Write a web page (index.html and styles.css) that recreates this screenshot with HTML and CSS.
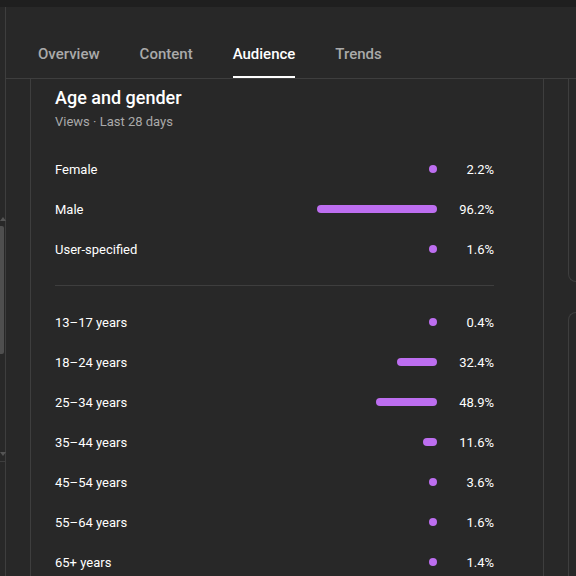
FILE: index.html
```html
<!DOCTYPE html>
<html lang="en">
<head>
    <meta charset="UTF-8">
    <meta name="viewport" content="width=device-width, initial-scale=1.0">
    <title>Audience</title>
    <link rel="stylesheet" href="styles.css">
</head>
<body>
    <div class="topbar"></div>
    <div class="page">
        <aside class="rail">
            <span class="arrow up"></span>
            <span class="thumb"></span>
            <span class="arrow down"></span>
            <span class="rail-line"></span>
        </aside>
        <main class="main">
            <nav class="tabs">
                <a class="tab">Overview</a>
                <a class="tab">Content</a>
                <a class="tab active">Audience</a>
                <a class="tab">Trends</a>
            </nav>
            <div class="columns">
                <section class="card">
                    <h2>Age and gender</h2>
                    <p class="subtitle">Views · Last 28 days</p>
                    <div class="list" id="gender"></div>
                    <hr class="divider">
                    <div class="list" id="age"></div>
                </section>
                <div class="side">
                    <div class="side-card first"></div>
                    <div class="side-card second"></div>
                </div>
            </div>
        </main>
    </div>

    <script>
        document.addEventListener('DOMContentLoaded', () => {
            const gender = [
                ['Female', 2.2],
                ['Male', 96.2],
                ['User-specified', 1.6],
            ];
            const age = [
                ['13–17 years', 0.4],
                ['18–24 years', 32.4],
                ['25–34 years', 48.9],
                ['35–44 years', 11.6],
                ['45–54 years', 3.6],
                ['55–64 years', 1.6],
                ['65+ years', 1.4],
            ];

            function renderList(container, rows) {
                rows.forEach(([label, pct]) => {
                    const width = Math.max(8, Math.round(pct * 1.247));
                    const row = document.createElement('div');
                    row.className = 'row';
                    row.innerHTML = `
                        <span class="label">${label}</span>
                        <span class="track"><span class="bar" style="width:${width}px"></span></span>
                        <span class="pct">${pct.toFixed(1)}%</span>
                    `;
                    container.appendChild(row);
                });
            }

            renderList(document.getElementById('gender'), gender);
            renderList(document.getElementById('age'), age);
        });
    </script>
</body>
</html>
```

FILE: styles.css
```css
body {
    margin: 0;
    height: 576px;
    overflow: hidden;
    background-color: #282828;
    color: #fff;
    font-family: Roboto, "Noto Sans", sans-serif;
}
.topbar {
    height: 7px;
    background-color: #1f1f1f;
}
.page {
    display: flex;
    height: 569px;
}
.rail {
    width: 5px;
    border-right: 1px solid #3e3e3e;
    display: flex;
    flex-direction: column;
    align-items: flex-start;
    padding-top: 210px;
}
.arrow {
    width: 0;
    height: 0;
    border-left: 3px solid transparent;
    border-right: 3px solid transparent;
}
.arrow.up {
    border-bottom: 4px solid #555;
}
.arrow.down {
    border-top: 4px solid #555;
    margin-top: 98px;
}
.thumb {
    width: 4px;
    height: 128px;
    margin-top: 5px;
    background-color: #4f4f4f;
    border-radius: 0 2px 2px 0;
}
.rail-line {
    width: 5px;
    height: 1px;
    margin-top: 5px;
    background-color: #3e3e3e;
}
.main {
    flex: 1;
    display: flex;
    flex-direction: column;
    min-width: 0;
}
.tabs {
    height: 71px;
    display: flex;
    align-items: flex-end;
    gap: 40px;
    padding-left: 32px;
    border-bottom: 1px solid #3e3e3e;
}
.tab {
    font-size: 15px;
    font-weight: 500;
    line-height: 20px;
    color: #aaa;
    padding-bottom: 12px;
    border-bottom: 2px solid transparent;
}
.tab.active {
    color: #fff;
    border-bottom-color: #fff;
}
.columns {
    flex: 1;
    display: flex;
    gap: 24px;
    padding-left: 24px;
    min-height: 0;
}
.card {
    width: 464px;
    flex-shrink: 0;
    padding: 5px 24px 0;
    border-left: 1px solid #3e3e3e;
    border-right: 1px solid #3e3e3e;
}
.card h2 {
    margin: 0;
    font-size: 18px;
    font-weight: 500;
    line-height: 28px;
}
.subtitle {
    margin: 1px 0 18px;
    font-size: 13px;
    line-height: 18px;
    color: #aaa;
}
.list {
    width: 439px;
}
.row {
    display: flex;
    align-items: center;
    height: 40px;
    font-size: 13px;
}
.label {
    flex: 1;
}
.track {
    width: 125px;
    display: flex;
    justify-content: flex-end;
}
.bar {
    height: 8px;
    border-radius: 4px;
    background-color: #bd6ef0;
}
.pct {
    width: 57px;
    text-align: right;
}
.divider {
    width: 439px;
    margin: 16px 0;
    border: none;
    border-top: 1px solid #3e3e3e;
}
.side {
    flex: 1;
    display: flex;
    flex-direction: column;
    gap: 30px;
}
.side-card {
    border: 1px solid #3e3e3e;
    border-right: none;
}
.side-card.first {
    height: 202px;
    border-top: none;
    border-radius: 0 0 0 12px;
}
.side-card.second {
    flex: 1;
    border-bottom: none;
    border-radius: 12px 0 0 0;
}
```
